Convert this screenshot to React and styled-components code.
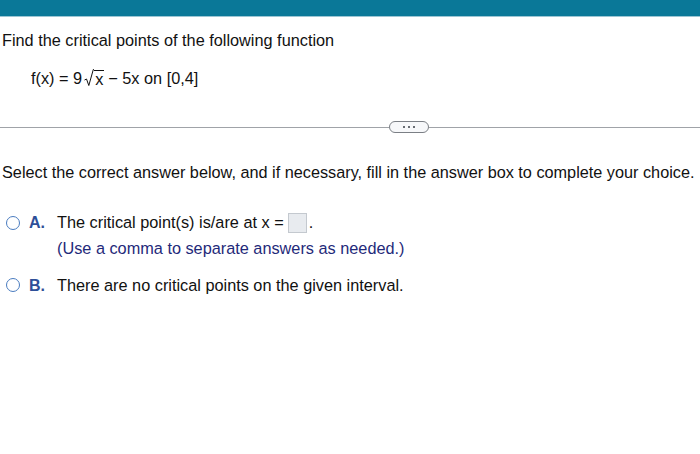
import React from "react";
import styled, { createGlobalStyle } from "styled-components";

const Global = createGlobalStyle`
  html, body { margin: 0; padding: 0; background: #fff; }
  body { font-family: "Liberation Sans", Arial, sans-serif; color: #111; }
`;

const Page = styled.div`
  width: 700px;
  height: 454px;
  overflow: hidden;
  background: #fff;
`;

const TopBar = styled.div`
  height: 16px;
  background: #0a7898;
  border-bottom: 1px solid #9cc6d4;
`;

const Content = styled.div`
  padding: 0 0 0 2px;
`;

const Prompt = styled.div`
  font-size: 16.3px;
  margin-top: 13.5px;
  line-height: 19px;
`;

const Formula = styled.div`
  font-size: 16.3px;
  margin: 19px 0 0 29px;
  line-height: 19px;
  height: 19px;
  display: flex;
  align-items: center;
  white-space: pre;
`;

const Sqrt = styled.span`
  display: inline-flex;
  align-items: flex-end;
  margin: 0 4px 0 2px;
`;

const Radicand = styled.span`
  border-top: 1px solid #111;
  padding: 0 1px 0 1px;
  line-height: 16px;
`;

const Divider = styled.div`
  display: flex;
  align-items: center;
  margin: 32.5px 0 0 -2px;
  height: 14px;
`;

const Rule = styled.div`
  flex: ${(p) => (p.$width ? `0 0 ${p.$width}px` : "1")};
  height: 1px;
  background: #a0a3a8;
`;

const Pill = styled.div`
  box-sizing: border-box;
  width: 40px;
  height: 12px;
  border: 1px solid #7b7f85;
  border-radius: 6px;
  background: #f7f8fa;
  display: flex;
  align-items: center;
  justify-content: center;
  gap: 3px;
`;

const Dot = styled.span`
  width: 2px;
  height: 2px;
  background: #3a3f47;
  border-radius: 50%;
`;

const Instruction = styled.div`
  font-size: 16.25px;
  margin-top: 29px;
  line-height: 19px;
  white-space: nowrap;
`;

const Options = styled.div`
  margin-top: 29.5px;
  display: flex;
  flex-direction: column;
  gap: 17.5px;
  padding-left: 4px;
`;

const Option = styled.div`
  display: flex;
  align-items: flex-start;
`;

const Radio = styled.span`
  box-sizing: border-box;
  width: 14px;
  height: 14px;
  border: 1.5px solid #4a7cc0;
  border-radius: 50%;
  margin-top: ${(p) => p.$top}px;
  flex: none;
`;

const Letter = styled.span`
  font-weight: bold;
  color: #2e4f98;
  font-size: 16px;
  width: 28px;
  margin-left: 9px;
  line-height: ${(p) => p.$lh}px;
  flex: none;
`;

const Body = styled.div`
  font-size: 16.3px;
  line-height: 19px;
`;

const Line = styled.div`
  display: flex;
  align-items: center;
  height: 22px;
`;

const Hint = styled.div`
  color: #1f2a7a;
  margin-top: 5.5px;
`;

const AnswerBox = styled.span`
  box-sizing: border-box;
  display: inline-block;
  width: 19px;
  height: 20px;
  background: #e8ebef;
  border: 1px solid #c4c9cf;
  margin: 0 2px 0 4px;
`;

export default function App() {
  return (
    <Page>
      <Global />
      <TopBar />
      <Content>
        <Prompt>Find the critical points of the following function</Prompt>
        <Formula>
          {"f(x) = 9"}
          <Sqrt>
            <svg width="10" height="18" viewBox="0 0 10 18">
              <path d="M0.5 11 L2.5 10 L4.8 16.5 L9.3 0.5 L10 0.5" fill="none" stroke="#111" strokeWidth="1" />
            </svg>
            <Radicand>x</Radicand>
          </Sqrt>
          {"− 5x on [0,4]"}
        </Formula>
      </Content>
      <Divider>
        <Rule $width={391} />
        <Pill>
          <Dot />
          <Dot />
          <Dot />
        </Pill>
        <Rule />
      </Divider>
      <Content>
        <Instruction>
          Select the correct answer below, and if necessary, fill in the answer box to complete your choice.
        </Instruction>
        <Options>
          <Option>
            <Radio $top={4} />
            <Letter $lh={22}>A.</Letter>
            <Body>
              <Line>
                The critical point(s) is/are at x =<AnswerBox />.
              </Line>
              <Hint>(Use a comma to separate answers as needed.)</Hint>
            </Body>
          </Option>
          <Option>
            <Radio $top={2.5} />
            <Letter $lh={19}>B.</Letter>
            <Body>There are no critical points on the given interval.</Body>
          </Option>
        </Options>
      </Content>
    </Page>
  );
}
